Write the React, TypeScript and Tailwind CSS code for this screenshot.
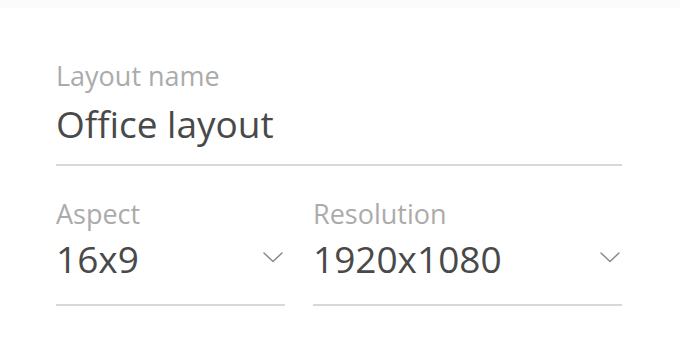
const font = { fontFamily: '"Open Sans", "Noto Sans", sans-serif' };

function Chevron() {
  return (
    <svg width="22" height="12" viewBox="0 0 22 12" fill="none" className="mr-[1px] mb-[4px] shrink-0">
      <polyline points="2,2 11,10.5 20,2" stroke="#8a8a8a" strokeWidth="1.5" strokeLinecap="round" strokeLinejoin="round" />
    </svg>
  );
}

export default function App() {
  return (
    <div className="w-[680px] h-[362px] bg-white" style={font}>
      <div className="h-[8px] bg-[#fbfbfb]" />
      <div className="pl-[56px] pr-[58px] pt-[50px]">
        {/* Layout name */}
        <div className="border-b-2 border-[#d8d8d8] pb-[15px]">
          <div className="text-[27px] leading-[36px] text-[#ababab]">Layout name</div>
          <div className="mt-[5px] text-[37px] leading-[50px] text-[#494949]">Office layout</div>
        </div>

        {/* Aspect / Resolution */}
        <div className="mt-[30px] grid grid-cols-[229px_1fr] gap-[28px]">
          <div className="border-b-2 border-[#d8d8d8] pb-[20px]">
            <div className="text-[27px] leading-[36px] text-[#ababab]">Aspect</div>
            <div className="mt-[2px] flex items-center justify-between">
              <span className="text-[37px] leading-[50px] text-[#494949]">16x9</span>
              <Chevron />
            </div>
          </div>
          <div className="border-b-2 border-[#d8d8d8] pb-[20px]">
            <div className="text-[27px] leading-[36px] text-[#ababab]">Resolution</div>
            <div className="mt-[2px] flex items-center justify-between">
              <span className="text-[37px] leading-[50px] text-[#494949]">1920x1080</span>
              <Chevron />
            </div>
          </div>
        </div>
      </div>
    </div>
  );
}
